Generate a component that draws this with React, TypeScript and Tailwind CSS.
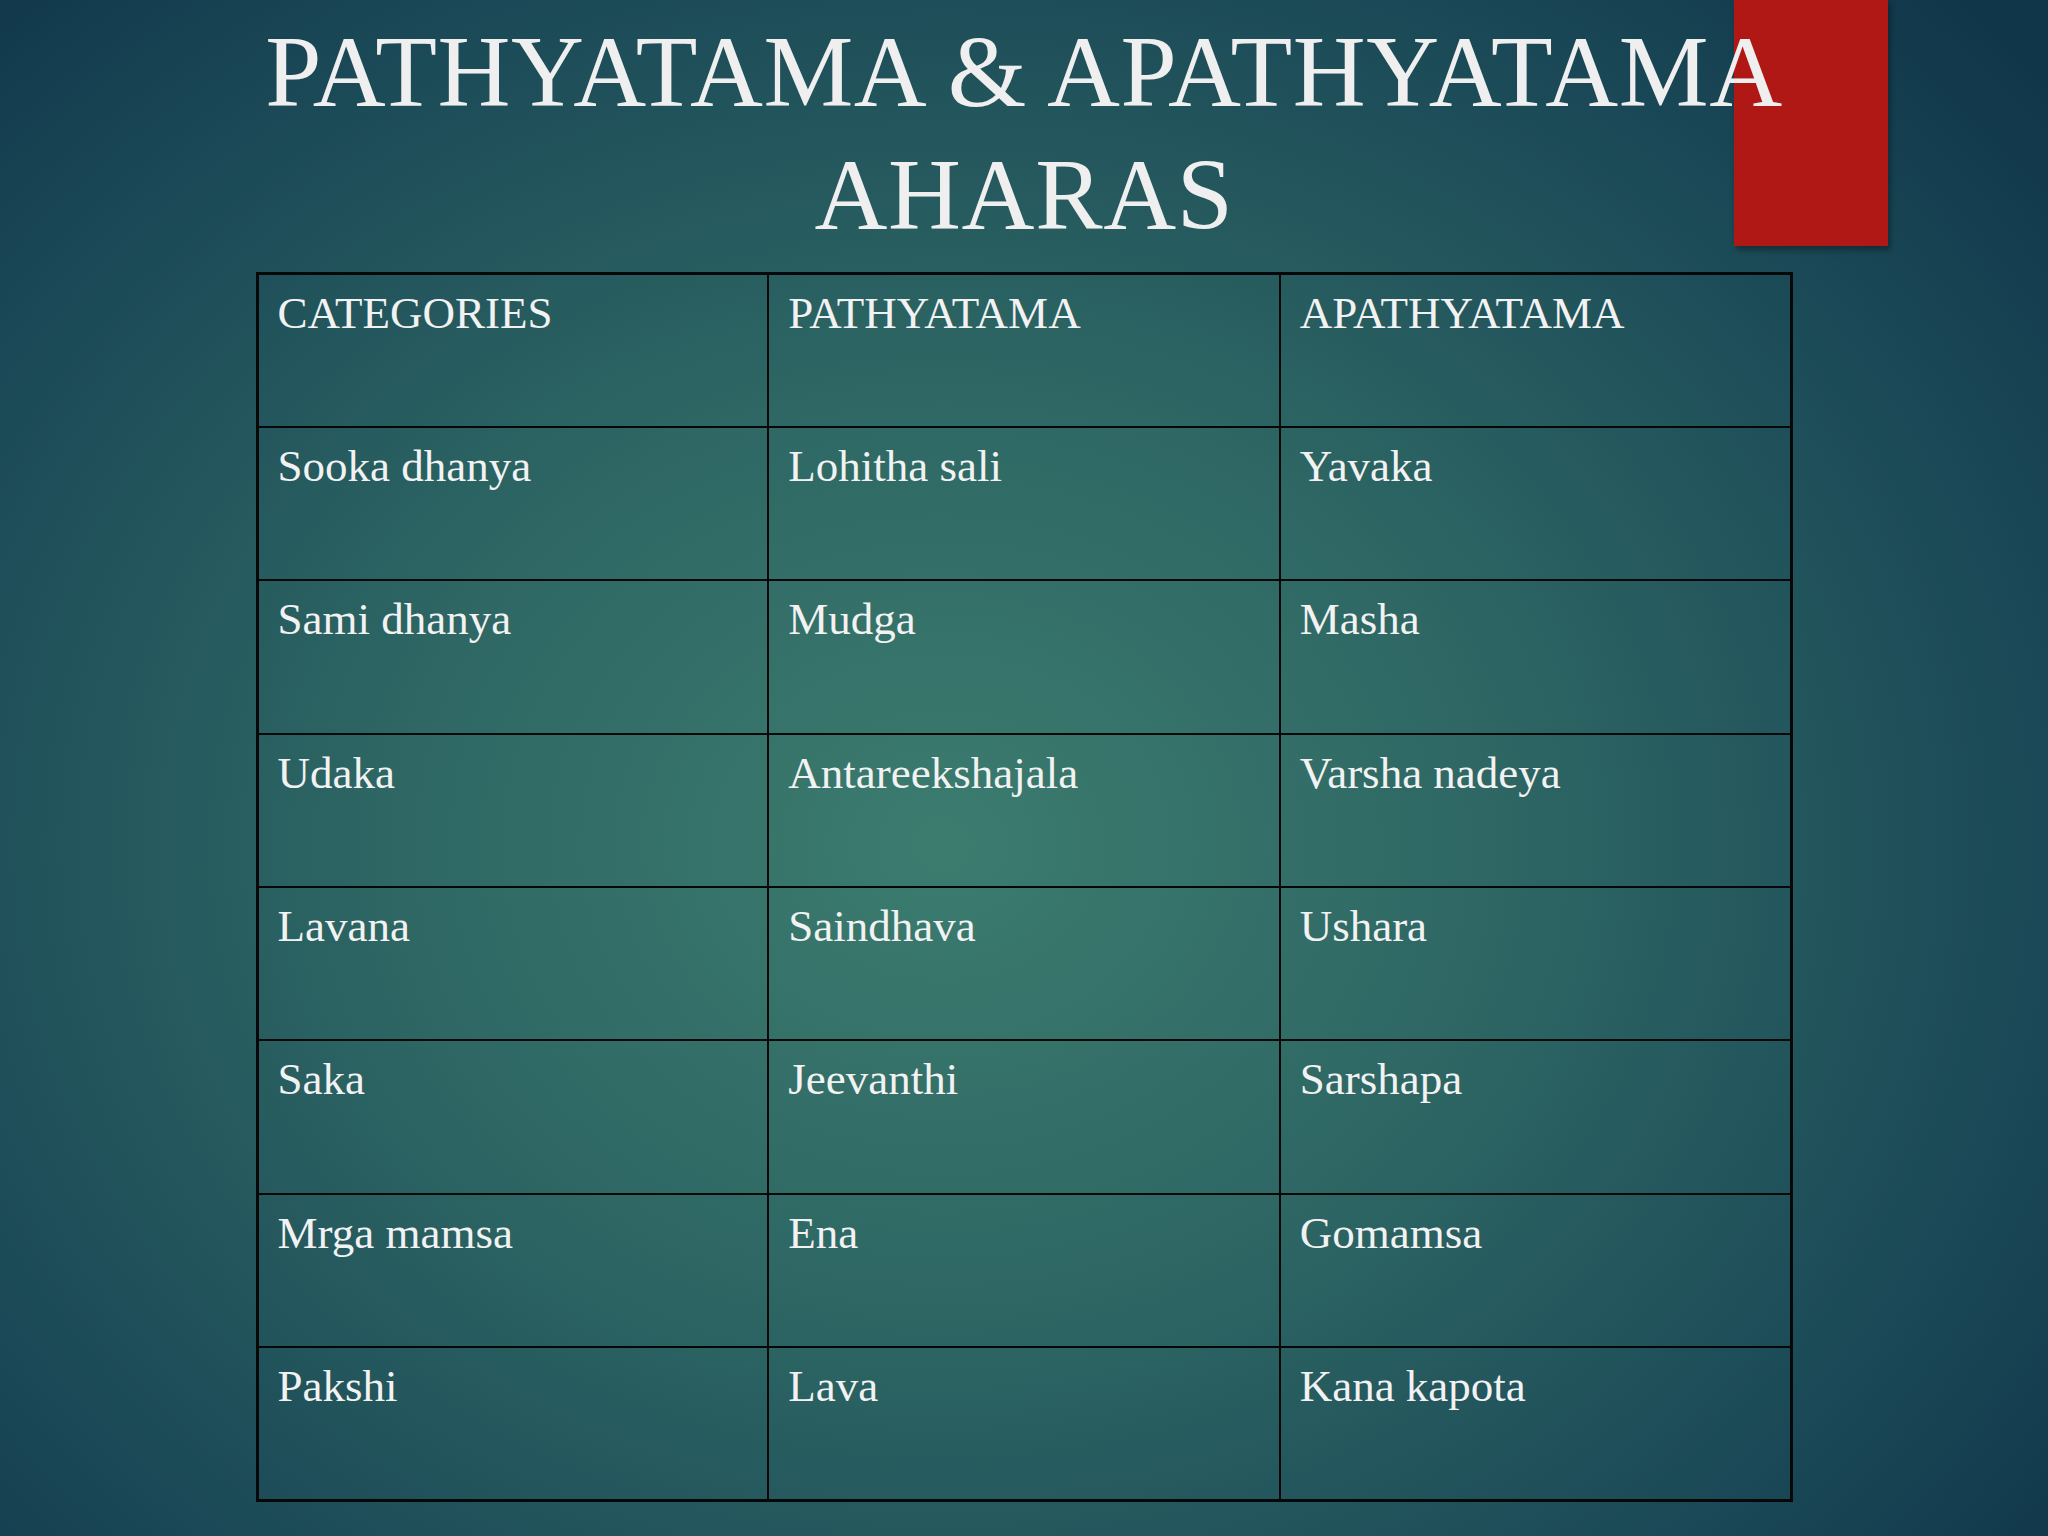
const rows: [string, string, string][] = [
  ["CATEGORIES", "PATHYATAMA", "APATHYATAMA"],
  ["Sooka dhanya", "Lohitha sali", "Yavaka"],
  ["Sami dhanya", "Mudga", "Masha"],
  ["Udaka", "Antareekshajala", "Varsha nadeya"],
  ["Lavana", "Saindhava", "Ushara"],
  ["Saka", "Jeevanthi", "Sarshapa"],
  ["Mrga mamsa", "Ena", "Gomamsa"],
  ["Pakshi", "Lava", "Kana kapota"],
];

export default function App() {
  return (
    <div
      className="relative w-[2048px] h-[1536px] overflow-hidden bg-[radial-gradient(ellipse_70%_78%_at_46%_55%,#3c7c6f_0%,#2e6764_38%,#1c4b58_74%,#10364a_100%)] font-['Liberation_Serif','Times_New_Roman',serif] text-[#f2f2f2]"
    >
      {/* red accent block, sits behind the title */}
      <div className="absolute left-[1734px] top-0 w-[154px] h-[246px] bg-[#b01815] shadow-[2px_4px_6px_rgba(0,0,0,0.35)]" />

      <div className="relative flex flex-col items-center pt-[11px]">
        <h1 className="text-center text-[101px] leading-[123px] tracking-[0.6px] font-normal text-[#efefef]">
          PATHYATAMA &amp; APATHYATAMA
          <br />
          AHARAS
        </h1>

        <table className="mt-[15px] w-[1537px] border-collapse border-[3px] border-[#080808] table-fixed">
          <tbody>
            {rows.map((r, i) => (
              <tr key={i} className="h-[153.4px]">
                {r.map((c, j) => (
                  <td
                    key={j}
                    className="border-2 border-[#080808] align-top pl-[19px] pt-[12px] text-[45px] leading-[52px]"
                  >
                    {c}
                  </td>
                ))}
              </tr>
            ))}
          </tbody>
        </table>
      </div>
    </div>
  );
}
